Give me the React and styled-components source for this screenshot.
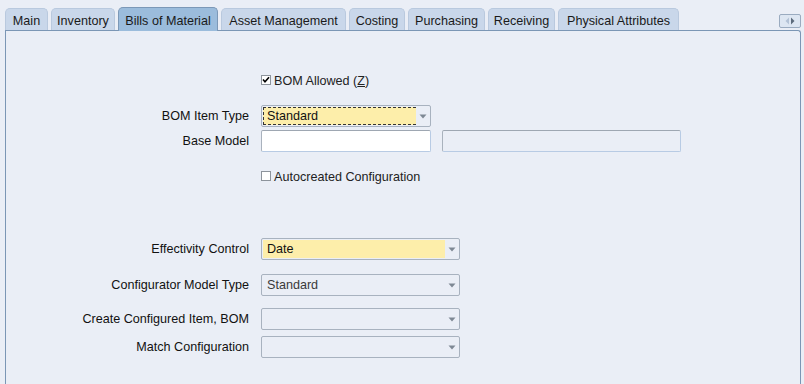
import React from "react";
import styled, { createGlobalStyle } from "styled-components";

const Global = createGlobalStyle`
  html, body { margin: 0; padding: 0; background: #eaeef6; }
  body { font-family: "Liberation Sans", Arial, sans-serif; font-size: 12.6px; color: #111; }
  #root { height: 384px; overflow: hidden; }
`;

const Page = styled.div`
  height: 384px;
  padding: 7px 3px 0 5px;
  box-sizing: border-box;
  display: flex;
  flex-direction: column;
`;

const TabBar = styled.div`
  display: flex;
  align-items: flex-end;
  gap: 3px;
  height: 24px;
`;

const Tab = styled.div`
  box-sizing: border-box;
  width: ${(p) => p.$w}px;
  height: ${(p) => (p.$active ? 24 : 23)}px;
  padding-top: ${(p) => (p.$active ? 3 : 2)}px;
  display: flex;
  align-items: center;
  justify-content: center;
  background: ${(p) => (p.$active ? "#9bbcdc" : "#c9d7ea")};
  border: 1px solid ${(p) => (p.$active ? "#7c98b7" : "#b9c9de")};
  border-bottom: none;
  border-radius: 5px 5px 0 0;
  color: #1a1a1a;
  white-space: nowrap;
  ${(p) => (p.$active ? "position: relative; z-index: 1;" : "")}
`;

const ScrollButton = styled.div`
  margin-left: auto;
  margin-bottom: 3px;
  width: 22px;
  height: 14px;
  box-sizing: border-box;
  border: 1px solid #9aabc0;
  border-radius: 2px;
  background: #dde6f2;
  display: flex;
  align-items: center;
  justify-content: center;
`;

const Panel = styled.div`
  flex: 1;
  border: 1px solid #7b96b5;
  border-bottom: none;
  border-radius: 0 3px 0 0;
  margin-top: -1px;
  background: #eaeef6;
`;

const Form = styled.div`
  display: flex;
  flex-direction: column;
`;

const Row = styled.div`
  display: grid;
  grid-template-columns: 243px auto;
  column-gap: 12px;
  align-items: center;
  height: 22px;
  margin-top: ${(p) => p.$mt}px;
`;

const Label = styled.div`
  text-align: right;
  white-space: nowrap;
  color: #111;
`;

const Fields = styled.div`
  display: flex;
  align-items: center;
  gap: 11px;
`;

const CheckWrap = styled.label`
  display: flex;
  align-items: center;
  gap: 3px;
  color: #222;
`;

const Box = styled.span`
  width: 10px;
  height: 10px;
  box-sizing: border-box;
  border: 1px solid #8d949c;
  background: #fff;
  display: flex;
  align-items: center;
  justify-content: center;
  margin-top: -3px;
`;

const SelectBox = styled.div`
  box-sizing: border-box;
  width: ${(p) => p.$w}px;
  height: 22px;
  border: 1px solid #a8b2bf;
  border-radius: 2px;
  display: flex;
  align-items: stretch;
  background: #eaeef6;
`;

const Value = styled.div`
  flex: 1;
  box-sizing: border-box;
  margin: 1px 0 1px 1px;
  padding-left: 3px;
  display: flex;
  align-items: center;
  background: ${(p) => (p.$yellow ? "#fdeeaa" : "transparent")};
  border: ${(p) => (p.$focus ? "1px dashed #333" : "1px solid transparent")};
  border-right: none;
  color: ${(p) => (p.$muted ? "#3a3a3a" : "#111")};
`;

const Arrow = styled.div`
  width: 14px;
  display: flex;
  align-items: center;
  justify-content: center;
`;

const TextField = styled.div`
  box-sizing: border-box;
  width: ${(p) => p.$w}px;
  height: 22px;
  border: 1px solid #b8cbe4;
  border-top-color: #9ea7b2;
  border-left-color: #a9b2bd;
  border-radius: 2px;
  background: ${(p) => (p.$disabled ? "#eaeef6" : "#fff")};
`;

const Mnemonic = styled.span`
  text-decoration: underline;
`;

const Tri = () => (
  <svg width="8" height="5" viewBox="0 0 8 5">
    <path d="M0.5 0.5 L7.5 0.5 L4 4.5 Z" fill="#7e8894" />
  </svg>
);

const Check = () => (
  <svg width="8" height="8" viewBox="0 0 8 8">
    <path d="M1 3.5 L3 5.8 L7 1.2" stroke="#000" strokeWidth="1.6" fill="none" />
  </svg>
);

const Select = ({ w, value, yellow, focus, muted }) => (
  <SelectBox $w={w}>
    <Value $yellow={yellow} $focus={focus} $muted={muted}>
      {value}
    </Value>
    <Arrow>
      <Tri />
    </Arrow>
  </SelectBox>
);

const CheckBox = ({ checked, children }) => (
  <CheckWrap>
    <Box>{checked && <Check />}</Box>
    <span>{children}</span>
  </CheckWrap>
);

const tabs = [
  ["Main", 43],
  ["Inventory", 64],
  ["Bills of Material", 100],
  ["Asset Management", 125],
  ["Costing", 56],
  ["Purchasing", 77],
  ["Receiving", 67],
  ["Physical Attributes", 121],
];

export default function App() {
  return (
    <>
      <Global />
      <Page>
        <TabBar>
          {tabs.map(([t, w]) => (
            <Tab key={t} $w={w} $active={t === "Bills of Material"}>
              {t}
            </Tab>
          ))}
          <ScrollButton>
            <svg width="12" height="8" viewBox="0 0 12 8">
              <path d="M5 0.5 L5 7.5 L1.5 4 Z" fill="#b3c2d6" />
              <path d="M7 0.5 L7 7.5 L10.5 4 Z" fill="#5d6b7c" />
            </svg>
          </ScrollButton>
        </TabBar>
        <Panel>
          <Form>
            <Row $mt={39}>
              <span />
              <CheckBox checked>
                BOM Allowed (<Mnemonic>Z</Mnemonic>)
              </CheckBox>
            </Row>
            <Row $mt={13}>
              <Label>BOM Item Type</Label>
              <Select w={170} value="Standard" yellow focus />
            </Row>
            <Row $mt={3}>
              <Label>Base Model</Label>
              <Fields>
                <TextField $w={170} />
                <TextField $w={239} $disabled />
              </Fields>
            </Row>
            <Row $mt={14}>
              <span />
              <CheckBox>Autocreated Configuration</CheckBox>
            </Row>
            <Row $mt={50}>
              <Label>Effectivity Control</Label>
              <Select w={199} value="Date" yellow />
            </Row>
            <Row $mt={14}>
              <Label>Configurator Model Type</Label>
              <Select w={199} value="Standard" muted />
            </Row>
            <Row $mt={12}>
              <Label>Create Configured Item, BOM</Label>
              <Select w={199} value="" />
            </Row>
            <Row $mt={6}>
              <Label>Match Configuration</Label>
              <Select w={199} value="" />
            </Row>
          </Form>
        </Panel>
      </Page>
    </>
  );
}
